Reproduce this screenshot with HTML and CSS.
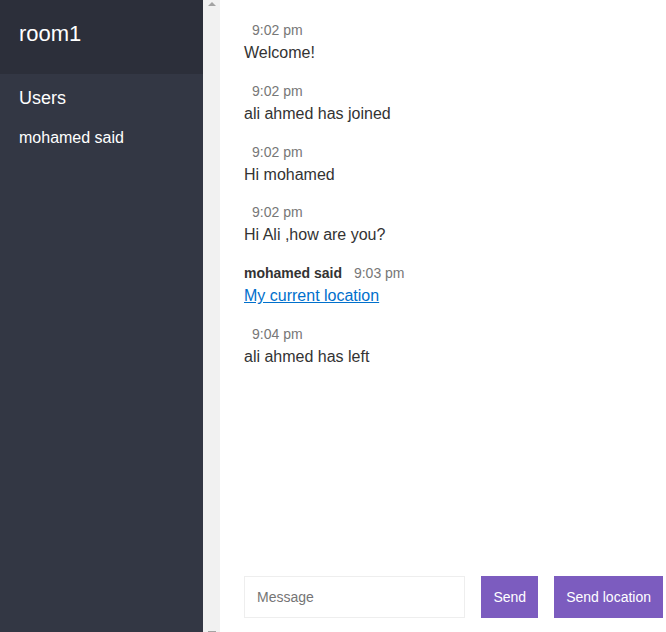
FILE: index.html
```html
<!DOCTYPE html>
<html lang="en">
<head>
    <meta charset="UTF-8">
    <meta name="viewport" content="width=device-width, initial-scale=1.0">
    <title>Chat App</title>
    <link rel="stylesheet" href="styles.css">
</head>
<body>
    <div class="chat">
        <div class="chat__sidebar">
            <div class="sidebar__content">
                <h2 class="room-title">room1</h2>
                <h3 class="list-title">Users</h3>
                <ul class="users">
                    <li>mohamed said</li>
                </ul>
            </div>
            <div class="scrollbar">
                <div class="scrollbar__up"></div>
                <div class="scrollbar__down"></div>
            </div>
        </div>

        <div class="chat__main">
            <div id="messages" class="chat__messages">
                <div class="message">
                    <p class="message__head"><span class="message__name"></span><span class="message__meta">9:02 pm</span></p>
                    <p>Welcome!</p>
                </div>
                <div class="message">
                    <p class="message__head"><span class="message__name"></span><span class="message__meta">9:02 pm</span></p>
                    <p>ali ahmed has joined</p>
                </div>
                <div class="message">
                    <p class="message__head"><span class="message__name"></span><span class="message__meta">9:02 pm</span></p>
                    <p>Hi mohamed</p>
                </div>
                <div class="message">
                    <p class="message__head"><span class="message__name"></span><span class="message__meta">9:02 pm</span></p>
                    <p>Hi Ali ,how are you?</p>
                </div>
                <div class="message">
                    <p class="message__head"><span class="message__name">mohamed said</span> <span class="message__meta">9:03 pm</span></p>
                    <p><a href="#">My current location</a></p>
                </div>
                <div class="message">
                    <p class="message__head"><span class="message__name"></span><span class="message__meta">9:04 pm</span></p>
                    <p>ali ahmed has left</p>
                </div>
            </div>

            <div class="compose">
                <form id="message-form">
                    <input name="message" placeholder="Message" autocomplete="off">
                    <button type="button">Send</button>
                </form>
                <button id="send-location" type="button">Send location</button>
            </div>
        </div>
    </div>
</body>
</html>
```

FILE: styles.css
```css
* {
    margin: 0;
    padding: 0;
    box-sizing: border-box;
}

body {
    font-family: "Liberation Sans", Arial, sans-serif;
    font-size: 16px;
    color: #333;
    background-color: #fff;
}

.chat {
    display: flex;
    height: 100vh;
    overflow: hidden;
}

.chat__sidebar {
    display: flex;
    flex-shrink: 0;
    width: 220px;
}

.sidebar__content {
    width: 203px;
    color: white;
    background: #333744;
}

.room-title {
    font-weight: 400;
    font-size: 22px;
    background: #2c2f3a;
    padding: 21px 19px 27px 19px;
}

.list-title {
    font-weight: 400;
    font-size: 18px;
    padding: 14px 19px 0 19px;
}

.users {
    list-style-type: none;
    font-weight: 400;
    padding: 20px 19px 0 19px;
}

/* fake scrollbar track next to the sidebar */
.scrollbar {
    width: 17px;
    background: #f1f1f1;
    display: flex;
    flex-direction: column;
    justify-content: space-between;
    align-items: center;
}

.scrollbar__up {
    margin-top: 2px;
    width: 0;
    height: 0;
    border-left: 4px solid transparent;
    border-right: 4px solid transparent;
    border-bottom: 4px solid #a3a3a3;
}

.scrollbar__down {
    width: 8px;
    height: 1px;
    background: #a3a3a3;
}

.chat__main {
    flex-grow: 1;
    display: flex;
    flex-direction: column;
    min-width: 0;
}

.chat__messages {
    flex-grow: 1;
    padding: 22px 24px 0 24px;
    overflow: hidden;
}

.message {
    margin-bottom: 20.8px;
}

.message__head {
    font-size: 14px;
    margin-bottom: 6px;
}

.message__name {
    font-weight: 700;
    margin-right: 8px;
}

.message__meta {
    color: #777;
}

.message a {
    color: #0070CC;
}

.compose {
    display: flex;
    flex-shrink: 0;
    padding: 0 3px 14px 24px;
}

.compose form {
    display: flex;
    flex-grow: 1;
    margin-right: 16px;
}

.compose input {
    border: 1px solid #eeeeee;
    width: 100%;
    padding: 12px;
    margin-right: 16px;
    flex-grow: 1;
    font-family: "Liberation Sans", Arial, sans-serif;
    font-size: 14px;
    line-height: 16px;
    outline: none;
}

.compose input::placeholder {
    color: #757575;
}

button {
    cursor: pointer;
    padding: 12px;
    background: #7C5CBF;
    border: none;
    color: white;
    font-family: "Liberation Sans", Arial, sans-serif;
    font-size: 14px;
    line-height: 16px;
    white-space: nowrap;
}
```
